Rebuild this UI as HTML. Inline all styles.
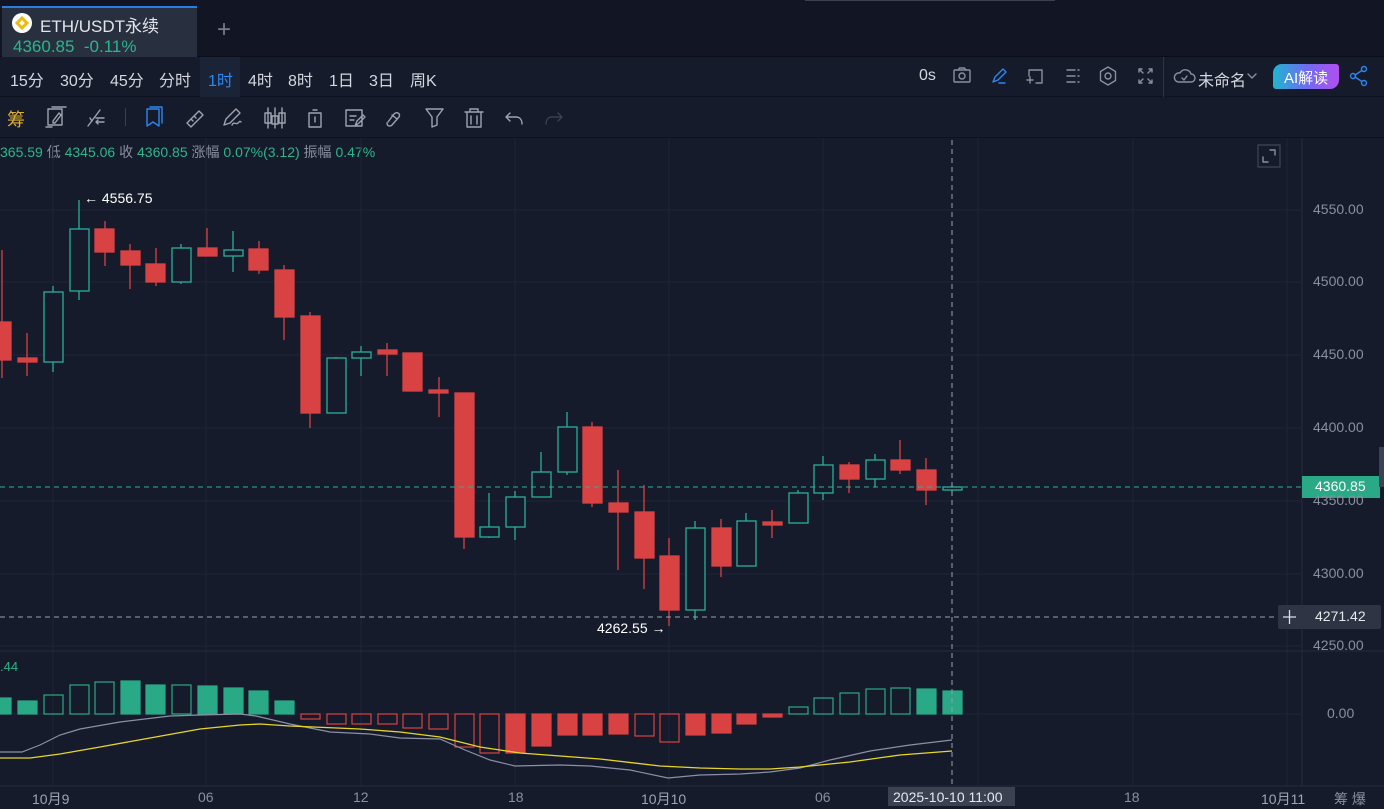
<!DOCTYPE html>
<html><head><meta charset="utf-8"><style>
*{margin:0;padding:0;box-sizing:border-box}
body{width:1384px;height:806px;overflow:hidden;background:#161b2b;font-family:"Liberation Sans","Noto Sans CJK SC",sans-serif;position:relative;color:#c9ccd6}
.abs{position:absolute}
#top{left:0;top:0;width:1384px;height:57px;background:#121624;border-bottom:1px solid #0b0e18}
#tab{left:2px;top:6px;width:195px;height:51px;background:#283040;border-top:2px solid #2a7ce0}
#row2{left:0;top:57px;width:1384px;height:40px;background:#161b2b;border-bottom:1px solid #0e1220}
#row3{left:0;top:97px;width:1384px;height:41px;background:#161b2b;border-bottom:1px solid #0e1220}
.tf{position:absolute;top:67px;font-size:16px;color:#d4d7e0}
svg{position:absolute;left:0;top:0}
.ax{position:absolute;font-size:14px;color:#8a8fa0;left:1313px}
.bx{position:absolute;top:789px;font-size:14px;color:#8a8fa0}
</style></head><body>
<div id="top" class="abs"></div>
<div id="tab" class="abs"></div>
<div class="abs" style="left:12px;top:13px;width:20px;height:20px;border-radius:50%;background:#fff"></div>
<div class="abs" style="left:17px;top:18px;width:10px;height:10px;background:#f0b90b;transform:rotate(45deg)"></div>
<div class="abs" style="left:20px;top:21px;width:4px;height:4px;background:#fff;transform:rotate(45deg)"></div>
<div class="abs" style="left:40px;top:12px;font-size:17px;color:#e2e4ea">ETH/USDT永续</div>
<div class="abs" style="left:13px;top:37px;font-size:17px;color:#2bb58c">4360.85&nbsp; -0.11%</div>
<div class="abs" style="left:217px;top:16px;font-size:24px;color:#777d8c;font-weight:200">+</div>
<div class="abs" style="left:805px;top:0;width:250px;height:1px;background:#3a4050"></div>
<div id="row2" class="abs"></div>
<div class="abs" style="left:200px;top:57px;width:40px;height:40px;background:#1b2437"></div>
<div class="tf" style="left:10px">15分</div><div class="tf" style="left:60px">30分</div><div class="tf" style="left:110px">45分</div><div class="tf" style="left:159px">分时</div><div class="tf" style="left:208px;color:#2d86f0">1时</div><div class="tf" style="left:248px">4时</div><div class="tf" style="left:288px">8时</div><div class="tf" style="left:329px">1日</div><div class="tf" style="left:369px">3日</div><div class="tf" style="left:410px">周K</div>
<div class="tf" style="left:919px">0s</div>
<div class="abs" style="left:1163px;top:57px;width:1px;height:40px;background:#2e3444"></div>
<div class="tf" style="left:1198px;color:#d4d7e0">未命名</div>
<div class="abs" style="left:1273px;top:64px;width:66px;height:25px;border-radius:9px 3px 9px 3px;background:linear-gradient(90deg,#1fb6d0,#6f6cf0,#b14ef0)"></div>
<div class="abs" style="left:1284px;top:67px;font-size:15px;color:#fff">AI解读</div>
<div id="row3" class="abs"></div>
<div class="abs" style="left:7px;top:106px;font-size:18px;color:#e0b030">筹</div>
<div class="abs" style="left:125px;top:108px;width:1px;height:18px;background:#3a4050"></div>
<div class="abs" style="left:0;top:142px;font-size:14px;color:#8a8fa0;white-space:nowrap">
<span style="color:#2bb58c">365.59</span> 低 <span style="color:#2bb58c">4345.06</span> 收 <span style="color:#2bb58c">4360.85</span> 涨幅 <span style="color:#2bb58c">0.07%(3.12)</span> 振幅 <span style="color:#2bb58c">0.47%</span></div>

<svg width="1384" height="806" viewBox="0 0 1384 806">
<g fill="none" stroke-width="1.4" stroke-linecap="round" stroke-linejoin="round">
<g stroke="#8a8fa0">
<rect x="954" y="70" width="16" height="12" rx="1"/><circle cx="962" cy="76" r="3"/><path d="M958 70l1.5-2h5l1.5 2"/>
<path d="M1029 70h13v13h-6M1029 70v6M1027 80h6M1030 77v6"/>
<path d="M1067 70h8M1067 76h8M1067 82h8M1078 70h1M1078 76h1M1078 82h1"/>
<path d="M1108 67l7.5 4.5v9l-7.5 4.5-7.5-4.5v-9z"/><circle cx="1108" cy="76" r="3"/>
<path d="M1139 69h3M1139 69v3M1152 69h-3M1152 69v3M1139 83h3M1139 83v-3M1152 83h-3M1152 83v-3M1140 70l3 3M1151 70l-3 3M1140 82l3-3M1151 82l-3-3"/>
<path d="M1178 82h13a4 4 0 0 0 0-8 6 6 0 0 0-11-1 4.5 4.5 0 0 0-2 9z"/><path d="M1182 78l2 2 3-4"/>
<path d="M1248 74l4 4 4-4"/>
</g>
<path stroke="#2d86f0" d="M993 82l2-5 8-8 3 3-8 8zM999 83h6"/>
<g stroke="#2d86f0"><circle cx="1364" cy="69" r="2.5"/><circle cx="1353" cy="76" r="2.5"/><circle cx="1364" cy="83" r="2.5"/><path d="M1355 75l7-4.5M1355 77l7 4.5"/></g>
<g stroke="#9ea3b2">
<path d="M48 109h14v16h-14zM52 107h14M52 127h-6M53 121l6-8 2 2-6 8h-2z"/>
<path d="M88 126l12-16M90 118l2 3M96 122h8M98 120l-2 2 2 2M104 118h-8"/>
<path d="M187 123l12-12 4 4-12 12zM191 119l2 2M194 116l2 2"/>
<path d="M224 125l2-6 10-10 4 4-10 10zM232 125c2-4 4 0 6-2s2-2 3-1"/>
<path d="M268 108v20M275 108v20M282 108v20M265 113h6v10h-6zM279 113h6v10h-6zM272 116h6v8h-6z"/>
<path d="M309 113h12v14h-12zM313 110h4M315 117v5"/>
<path d="M346 110h16v16h-16M346 110v16M350 116h6M350 120h4M355 126l2-5 6-6 2 2-6 6z"/>
<path d="M388 122l6-8c3-3 7 0 5 3l-7 8c-2 2-5 1-5-2M392 115l5 4"/>
<path d="M426 109h17l-6 8v8l-5 2v-10z"/>
<path d="M465 112h18M470 112v-3h8v3M467 112v15h14v-15M471 116v8M477 116v8"/>
<path d="M506 117h10c4 0 6 3 6 7M506 117l4-4M506 117l4 4"/>
</g>
<path stroke="#3a4050" d="M562 117h-10c-4 0-6 3-6 7M562 117l-4-4M562 117l-4 4"/>
<path stroke="#2d86f0" d="M147 109h12v17l-6-4-6 4zM150 107h12v16"/>
<rect x="1258" y="145" width="22" height="22" stroke="#3a4050"/>
<path stroke="#8a8fa0" d="M1263 157v5h5M1275 155v-5h-5"/>
</g>

<g stroke="#1e2437" stroke-width="1">
<path d="M53 138V786M206 138V786M361 138V786M515 138V786M669 138V786M823 138V786M978 138V786M1133 138V786M1287 138V786"/>
<path d="M0 210H1302M0 282H1302M0 355H1302M0 428H1302M0 501H1302M0 574H1302M0 646H1302M0 714H1302"/>
</g>
<path d="M0 651H1384" stroke="#252b3c"/>
<path d="M1302 138V786" stroke="#252b3c"/>
<path d="M0 786H1384" stroke="#252b3c"/>

<g stroke-width="1.3">
<g fill="#d94242" stroke="#d94242">
<path d="M2 250V378"/><rect x="-8" y="322" width="19" height="38"/>
<path d="M27 333V376"/><rect x="18" y="358" width="19" height="4"/>
<path d="M105 221V266"/><rect x="95" y="229" width="19" height="23"/>
<path d="M130 244V289"/><rect x="121" y="251" width="19" height="14"/>
<path d="M156 248V286"/><rect x="146" y="264" width="19" height="18"/>
<path d="M207 228V256"/><rect x="198" y="248" width="19" height="8"/>
<path d="M259 241V274"/><rect x="249" y="249" width="19" height="21"/>
<path d="M284 265V340"/><rect x="275" y="270" width="19" height="47"/>
<path d="M310 312V428"/><rect x="301" y="316" width="19" height="97"/>
<path d="M387 343V376"/><rect x="378" y="350" width="19" height="4"/>
<path d="M412 353V391"/><rect x="403" y="353" width="19" height="38"/>
<path d="M439 377V417"/><rect x="429" y="390" width="19" height="3"/>
<path d="M464 393V549"/><rect x="455" y="393" width="19" height="144"/>
<path d="M592 422V507"/><rect x="583" y="427" width="19" height="76"/>
<path d="M618 470V570"/><rect x="609" y="503" width="19" height="9"/>
<path d="M644 485V589"/><rect x="635" y="512" width="19" height="46"/>
<path d="M669 538V626"/><rect x="660" y="556" width="19" height="54"/>
<path d="M721 519V577"/><rect x="712" y="528" width="19" height="38"/>
<path d="M772 510V538"/><rect x="763" y="522" width="19" height="3"/>
<path d="M849 462V493"/><rect x="840" y="465" width="19" height="14"/>
<path d="M900 440V474"/><rect x="891" y="460" width="19" height="10"/>
<path d="M926 458V505"/><rect x="917" y="470" width="19" height="20"/>
</g>
<g fill="none" stroke="#2ab09a">
<path d="M53 286V372"/><rect x="44" y="292" width="19" height="70" fill="#161b2b"/>
<path d="M79 200V300"/><rect x="70" y="229" width="19" height="62" fill="#161b2b"/>
<path d="M181 244V284"/><rect x="172" y="248" width="19" height="34" fill="#161b2b"/>
<path d="M233 231V272"/><rect x="224" y="250" width="19" height="6" fill="#161b2b"/>
<path d="M336 357V413"/><rect x="327" y="358" width="19" height="55" fill="#161b2b"/>
<path d="M361 346V376"/><rect x="352" y="352" width="19" height="6" fill="#161b2b"/>
<path d="M489 493V538"/><rect x="480" y="527" width="19" height="10" fill="#161b2b"/>
<path d="M515 491V540"/><rect x="506" y="497" width="19" height="30" fill="#161b2b"/>
<path d="M541 452V497"/><rect x="532" y="472" width="19" height="25" fill="#161b2b"/>
<path d="M567 412V475"/><rect x="558" y="427" width="19" height="45" fill="#161b2b"/>
<path d="M695 521V620"/><rect x="686" y="528" width="19" height="82" fill="#161b2b"/>
<path d="M746 513V566"/><rect x="737" y="521" width="19" height="45" fill="#161b2b"/>
<path d="M798 490V523"/><rect x="789" y="493" width="19" height="30" fill="#161b2b"/>
<path d="M823 456V500"/><rect x="814" y="465" width="19" height="28" fill="#161b2b"/>
<path d="M875 454V487"/><rect x="866" y="460" width="19" height="19" fill="#161b2b"/>
<path d="M952 485V492"/><rect x="943" y="487" width="19" height="3" fill="#161b2b"/>
</g>
</g>

<g stroke-width="1.2">
<g fill="#2aa986" stroke="#2aa986">
<rect x="-8" y="698" width="19" height="16"/><rect x="18" y="701" width="19" height="13"/>
<rect x="121" y="681" width="19" height="33"/><rect x="146" y="685" width="19" height="29"/>
<rect x="198" y="686" width="19" height="28"/><rect x="224" y="688" width="19" height="26"/>
<rect x="249" y="691" width="19" height="23"/><rect x="275" y="701" width="19" height="13"/>
<rect x="917" y="689" width="19" height="25"/><rect x="943" y="691" width="19" height="23"/>
</g>
<g fill="none" stroke="#2aa986">
<rect x="44" y="695" width="19" height="19"/><rect x="70" y="685" width="19" height="29"/>
<rect x="95" y="682" width="19" height="32"/><rect x="172" y="685" width="19" height="29"/>
<rect x="789" y="707" width="19" height="7"/><rect x="814" y="698" width="19" height="16"/>
<rect x="840" y="693" width="19" height="21"/><rect x="866" y="689" width="19" height="25"/>
<rect x="891" y="688" width="19" height="26"/>
</g>
<g fill="none" stroke="#d94242">
<rect x="301" y="714" width="19" height="5"/><rect x="327" y="714" width="19" height="10"/>
<rect x="352" y="714" width="19" height="10"/><rect x="378" y="714" width="19" height="10"/>
<rect x="403" y="714" width="19" height="14"/><rect x="429" y="714" width="19" height="15"/>
<rect x="455" y="714" width="19" height="33"/><rect x="480" y="714" width="19" height="39"/>
<rect x="635" y="714" width="19" height="22"/><rect x="660" y="714" width="19" height="28"/>
</g>
<g fill="#d94242" stroke="#d94242">
<rect x="506" y="714" width="19" height="39"/><rect x="532" y="714" width="19" height="32"/>
<rect x="558" y="714" width="19" height="21"/><rect x="583" y="714" width="19" height="21"/>
<rect x="609" y="714" width="19" height="20"/><rect x="686" y="714" width="19" height="21"/>
<rect x="712" y="714" width="19" height="19"/><rect x="737" y="714" width="19" height="10"/>
<rect x="763" y="714" width="19" height="3"/>
</g>
</g>
<polyline fill="none" stroke="#8c8fa6" stroke-width="1.2" points="0,752 22,752 40,745 60,735 80,729 120,722 170,716 200,715 240,714 256,716 290,724 330,732 370,734 400,738 440,739 465,750 490,760 515,766 560,765 590,766 630,770 668,778 700,775 740,774 770,772 800,768 830,760 870,751 910,745 952,740"/>
<polyline fill="none" stroke="#e6d62a" stroke-width="1.3" points="0,758 30,758 60,754 100,747 150,738 200,729 240,725 260,724 290,726 360,729 400,732 440,737 480,747 520,753 560,756 600,759 660,766 700,768 740,769 770,769 800,767 850,762 900,755 952,751"/>

<path d="M952 140V786" stroke="#9aa0ae" stroke-dasharray="5 4"/>
<path d="M0 617H1280" stroke="#9aa0ae" stroke-dasharray="5 4"/>
<path d="M0 487H1302" stroke="#2ab09a" stroke-dasharray="5 4"/>
<rect x="1302" y="476" width="78" height="22" fill="#2aa986"/>
<rect x="1379" y="447" width="5" height="40" fill="#3a4258"/>
<rect x="1278" y="605" width="103" height="24" rx="2" fill="#2e3444"/>
<path d="M1283 617h13M1289.5 610v14" stroke="#dde" stroke-width="1.3"/>
<rect x="888" y="787" width="127" height="19" fill="#3a4150"/>
</svg>

<div class="ax" style="top:201px">4550.00</div>
<div class="ax" style="top:273px">4500.00</div>
<div class="ax" style="top:346px">4450.00</div>
<div class="ax" style="top:419px">4400.00</div>
<div class="ax" style="top:492px">4350.00</div>
<div class="ax" style="top:565px">4300.00</div>
<div class="ax" style="top:637px">4250.00</div>
<div class="ax" style="top:705px;left:1327px">0.00</div>
<div class="abs" style="left:1315px;top:478px;font-size:14px;color:#fff">4360.85</div>
<div class="abs" style="left:1315px;top:608px;font-size:14px;color:#e6e8ee">4271.42</div>
<div class="abs" style="left:84px;top:190px;font-size:14px;color:#fff">← 4556.75</div>
<div class="abs" style="left:597px;top:620px;font-size:14px;color:#fff">4262.55 →</div>
<div class="abs" style="left:0;top:659px;font-size:13px;color:#2bb58c">.44</div>
<div class="bx" style="left:32px;color:#a0a4b2">10月9</div>
<div class="bx" style="left:198px">06</div>
<div class="bx" style="left:353px">12</div>
<div class="bx" style="left:508px">18</div>
<div class="bx" style="left:641px;color:#a0a4b2">10月10</div>
<div class="bx" style="left:815px">06</div>
<div class="bx" style="left:893px;color:#e6e8ee">2025-10-10 11:00</div>
<div class="bx" style="left:1124px">18</div>
<div class="bx" style="left:1261px;color:#a0a4b2">10月11</div>
<div class="bx" style="left:1334px">筹 爆</div>
</body></html>
